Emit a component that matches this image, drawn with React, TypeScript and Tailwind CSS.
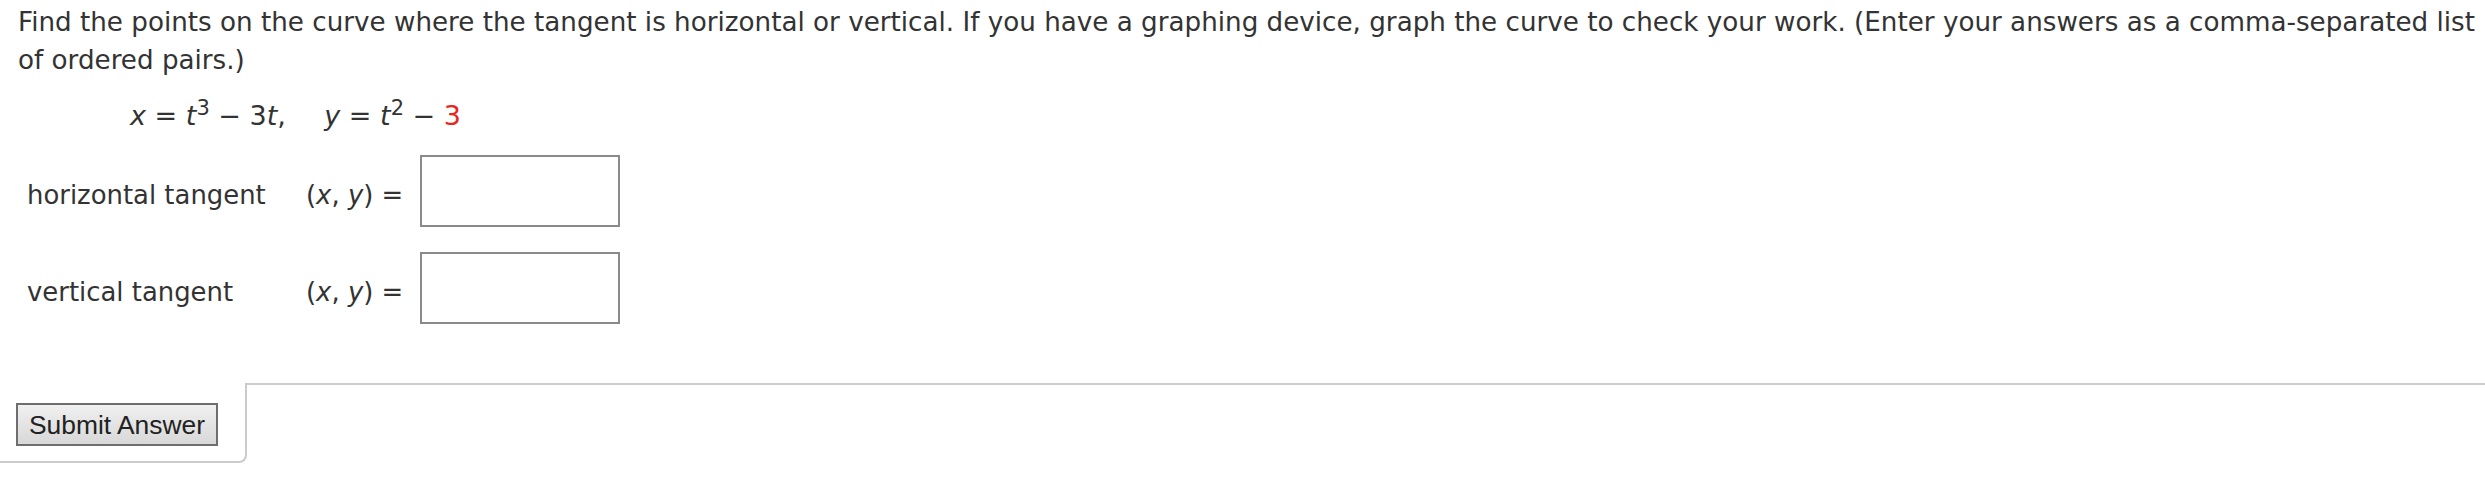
import React from 'react';

const AnswerRow: React.FC<{ label: string }> = ({ label }) => (
  <div className="flex items-center h-[72px]">
    <div className="w-[306px] pl-[27px] pt-[9px] text-[25.9px]">{label}</div>
    <div className="w-[114px] pt-[9px] whitespace-nowrap text-[25.9px]">
      (<i>x</i>, <i>y</i>) =
    </div>
    <input
      type="text"
      aria-label={label}
      className="w-[200px] h-[72px] border-2 border-[#8a8a8a] bg-white outline-none"
    />
  </div>
);

const App: React.FC = () => {
  return (
    <div
      className="w-full min-h-[480px] bg-white text-[#333333] text-[26.2px] leading-[37px]"
      style={{ fontFamily: "'DejaVu Sans', Verdana, sans-serif" }}
    >
      <p className="pl-[18px] pt-[3px] leading-[38px]">
        Find the points on the curve where the tangent is horizontal or vertical. If you have a graphing device, graph
        the curve to check your work. (Enter your answers as a comma-separated list of ordered pairs.)
      </p>

      {/* Equation */}
      <div className="pl-[130px] mt-[18px] whitespace-pre text-[27px]">
        <i>x</i> = <i>t</i>
        <sup className="text-[21px]">3</sup> − 3<i>t</i>,{'    '}
        <span className="pl-[4px]" />
        <i>y</i> = <i>t</i>
        <sup className="text-[21px]">2</sup> − <span className="text-[#e8261f]">3</span>
      </div>

      <div className="mt-[21px] flex flex-col gap-[25px]">
        <AnswerRow label="horizontal tangent" />
        <AnswerRow label="vertical tangent" />
      </div>

      {/* Submit area */}
      <div className="mt-[59px] flex">
        <div className="w-[247px] h-[80px] border-r-2 border-b-2 border-[#cbcbcb] rounded-br-[8px] flex items-center pl-[16px] pt-[5px]">
          <button
            type="button"
            className="h-[43px] px-[11px] border-2 border-[#6e6e6e] bg-gradient-to-b from-[#f0f0f0] to-[#d8d8d8] text-[#222222] text-[26.4px] leading-[30px]"
            style={{ fontFamily: "'Liberation Sans', Arial, sans-serif" }}
          >
            Submit Answer
          </button>
        </div>
        <div className="flex-1 border-t-2 border-[#cbcbcb]" />
      </div>
    </div>
  );
};

export default App;
